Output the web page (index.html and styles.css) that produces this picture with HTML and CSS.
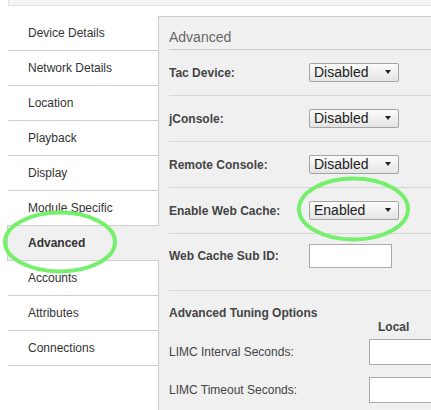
FILE: index.html
```html
<!DOCTYPE html>
<html>
<head>
<meta charset="utf-8">
<link rel="stylesheet" href="styles.css">
</head>
<body>
<div class="topbar"></div>
<div class="layout">
  <ul class="nav">
    <li>Device Details</li>
    <li>Network Details</li>
    <li>Location</li>
    <li>Playback</li>
    <li>Display</li>
    <li>Module Specific</li>
    <li class="active">Advanced</li>
    <li>Accounts</li>
    <li>Attributes</li>
    <li>Connections</li>
  </ul>
  <div class="panel">
    <h2 class="heading">Advanced</h2>
    <div class="row">
      <label class="label">Tac Device:</label>
      <span class="sel"><select><option>Disabled</option></select></span>
    </div>
    <div class="row">
      <label class="label">jConsole:</label>
      <span class="sel"><select><option>Disabled</option></select></span>
    </div>
    <div class="row">
      <label class="label">Remote Console:</label>
      <span class="sel"><select><option>Disabled</option></select></span>
    </div>
    <div class="row">
      <label class="label">Enable Web Cache:</label>
      <span class="sel"><select><option>Enabled</option></select></span>
    </div>
    <div class="row row-input">
      <label class="label">Web Cache Sub ID:</label>
      <input class="text" type="text">
    </div>
    <div class="tuning">
      <div class="tuning-title">Advanced Tuning Options</div>
      <div class="tuning-grid">
        <div></div>
        <div class="col-head">Local</div>
        <div class="tlabel">LIMC Interval Seconds:</div>
        <input class="text wide" type="text">
        <div class="tlabel">LIMC Timeout Seconds:</div>
        <input class="text wide" type="text">
      </div>
    </div>
  </div>
</div>
<svg class="marks" width="431" height="410" viewBox="0 0 431 410">
  <ellipse cx="60" cy="242" rx="55" ry="29.5" fill="none" stroke="#76ef6c" stroke-width="4"/>
  <ellipse cx="353.5" cy="209" rx="54.5" ry="30.5" fill="none" stroke="#76ef6c" stroke-width="4"/>
</svg>
</body>
</html>
```
FILE: styles.css
```css
html, body {
  margin: 0;
  padding: 0;
  overflow: hidden;
  background: #fff;
}
body {
  font-family: "Liberation Sans", Arial, sans-serif;
  font-size: 12px;
  color: #333;
  position: relative;
  width: 431px;
  height: 410px;
}
.topbar {
  margin-left: 8px;
  height: 5px;
  background: #f4f4f4;
  border-left: 1px solid #e2e2e2;
  border-bottom: 1px solid #e2e2e2;
}
.layout {
  display: flex;
  margin-top: 10px;
  padding-left: 8px;
  height: 394px;
  box-sizing: border-box;
}
.nav {
  list-style: none;
  margin: 0;
  padding: 0;
  width: 151px;
  flex: none;
}
.nav li {
  height: 34px;
  line-height: 34px;
  padding-left: 20px;
  border-bottom: 1px solid #cfcfcf;
  color: #333;
}
.nav li.active {
  position: relative;
  z-index: 1;
  background: #f0f0f0;
  font-weight: bold;
  padding-left: 20px;
  border-left: 1px solid #cfcfcf;
  margin-left: -1px;
  border-top: 1px solid #cfcfcf;
  margin-top: -1px;
}
.panel {
  flex: 1;
  min-width: 0;
  overflow: hidden;
  margin-left: -1px;
  background: #f0f0f0;
  border-top: 1px solid #cccccc;
  border-left: 1px solid #cccccc;
  padding-left: 10px;
}
.heading {
  margin: 0;
  padding: 12px 0 4px;
  font-size: 14px;
  line-height: 16px;
  font-weight: normal;
  color: #666;
  border-bottom: 1px solid #cccccc;
}
.row {
  display: flex;
  align-items: center;
  height: 45px;
  border-bottom: 1px solid #d6d6d6;
}
.row-input {
  height: auto;
  padding: 10px 0 22px;
}
.label {
  width: 140px;
  flex: none;
  font-weight: bold;
  color: #444;
}
.sel {
  position: relative;
  display: inline-block;
  width: 90px;
  height: 19px;
}
.sel select {
  -webkit-appearance: none;
  appearance: none;
  width: 90px;
  height: 19px;
  margin: 0;
  padding: 0 0 0 4px;
  border: 1px solid #a3a3a3;
  border-radius: 2px;
  background: linear-gradient(#fbfbfb, #e4e4e4);
  font-family: "Liberation Sans", Arial, sans-serif;
  font-size: 14px;
  line-height: 17px;
  color: #222;
  box-sizing: border-box;
}
.sel::after {
  content: "";
  position: absolute;
  right: 8px;
  top: 7px;
  border-left: 3px solid transparent;
  border-right: 3px solid transparent;
  border-top: 4px solid #222;
  pointer-events: none;
}
.text {
  box-sizing: border-box;
  width: 83px;
  height: 24px;
  margin: 0;
  border: 1px solid #a9a9a9;
  background: #fff;
  padding: 0 4px;
}
.tuning {
  padding-top: 15px;
}
.tuning-title {
  font-weight: bold;
  color: #444;
  line-height: 14px;
}
.tuning-grid {
  display: grid;
  grid-template-columns: 200px 90px;
  row-gap: 12px;
  align-items: center;
}
.col-head {
  font-weight: bold;
  color: #444;
  line-height: 14px;
  padding-left: 9px;
  margin-bottom: -7px;
}
.tlabel {
  color: #444;
}
.text.wide {
  width: 90px;
  height: 26px;
}
.marks {
  position: absolute;
  left: 0;
  top: 0;
  pointer-events: none;
  z-index: 5;
}
```
